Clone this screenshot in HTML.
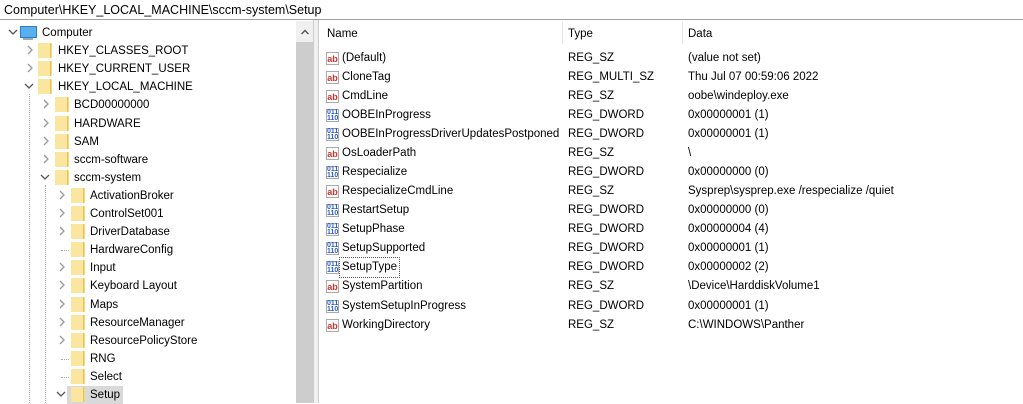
<!DOCTYPE html><html><head><style>
body{margin:0;width:1023px;height:403px;overflow:hidden;background:#fff;font-family:"Liberation Sans",sans-serif;font-size:11.5px;color:#000;position:relative}
.a{position:absolute}
.addr{left:0;top:0;width:1023px;height:20px;border-bottom:1px solid #a0a0a0;box-sizing:border-box;padding:3px 0 0 4px;font-size:12.5px}
.t{position:absolute;white-space:nowrap;line-height:18px;height:18px}
.fold{position:absolute;width:14px;height:15px;background:#f8d775;border-radius:1px}
.fold:after{content:"";position:absolute;left:0;top:0;width:12px;height:15px;background:#fbe6a0;border-right:1px solid #e8c15a}
.chev{position:absolute;width:10px;height:10px}
.dl{position:absolute;border-left:1px dotted #aaa;width:0}
.dh{position:absolute;border-top:1px dotted #aaa;height:0;width:8px}
.r{position:absolute;left:326px;white-space:nowrap;height:19px;line-height:19px}
.ic{position:absolute;left:0;top:3px;width:13px;height:13px;border:1px solid #aaa;background:#fff;font-size:9px;font-weight:bold;line-height:12px;text-align:center;box-sizing:border-box}
.ab{color:#d2322d}
.bn{color:#2b5bd0;font-size:7px;line-height:6px;letter-spacing:0}
</style></head><body>
<div class="a addr">Computer\HKEY_LOCAL_MACHINE\sccm-system\Setup</div>
<div class="a" style="left:296px;top:21px;width:17px;height:382px;background:#f0f0f0"></div>
<div class="a" style="left:296px;top:42px;width:17px;height:361px;background:#cdcdcd"></div>
<svg class="a" style="left:300px;top:28px" width="10" height="8"><path d="M1.5 6 L5 2.5 L8.5 6" fill="none" stroke="#555" stroke-width="1.4"/></svg>
<div class="a" style="left:313px;top:20px;width:4px;height:383px;background:#f0f0f0;border-left:1px solid #ccc;border-right:1px solid #ccc"></div>
<div class="a" style="left:327px;top:28px">Name</div>
<div class="a" style="left:568px;top:28px">Type</div>
<div class="a" style="left:688px;top:28px">Data</div>
<div class="a" style="left:562px;top:22px;width:1px;height:22px;background:#e5e5e5"></div>
<div class="a" style="left:682px;top:22px;width:1px;height:22px;background:#e5e5e5"></div>
<div id="tree"></div><div id="list"></div>
<script>
var T=[[0,'Computer','v'],[1,'HKEY_CLASSES_ROOT','>'],[1,'HKEY_CURRENT_USER','>'],[1,'HKEY_LOCAL_MACHINE','v'],[2,'BCD00000000','>'],[2,'HARDWARE','>'],[2,'SAM','>'],[2,'sccm-software','>'],[2,'sccm-system','v'],[3,'ActivationBroker','>'],[3,'ControlSet001','>'],[3,'DriverDatabase','>'],[3,'HardwareConfig',''],[3,'Input','>'],[3,'Keyboard Layout','>'],[3,'Maps','>'],[3,'ResourceManager','>'],[3,'ResourcePolicyStore','>'],[3,'RNG',''],[3,'Select',''],[3,'Setup','v']];
var h='';var X=[[8,20,42],[24,38,58],[40,55,74],[56,71,90]];
h+='<div class="dl" style="left:29px;top:94px;height:309px"></div><div class="dl" style="left:45px;top:185px;height:218px"></div>';
T.forEach(function(e,i){var y=23+i*18.1,x=X[e[0]];
if(e[1]=='Setup')h+='<div class="a" style="left:67px;top:'+(y+1)+'px;width:56px;height:18px;background:#d9d9d9"></div>';
if(e[2]=='>')h+='<svg class="chev" style="left:'+(x[0]+1)+'px;top:'+(y+4)+'px"><path d="M3 1 L7 5 L3 9" fill="none" stroke="#999" stroke-width="1.3"/></svg>';
else if(e[2]=='v')h+='<svg class="chev" style="left:'+x[0]+'px;top:'+(y+4)+'px"><path d="M1 3 L5 7 L9 3" fill="none" stroke="#555" stroke-width="1.3"/></svg>';
else h+='<div class="dh" style="left:'+(x[0]+5)+'px;top:'+(y+10)+'px"></div>';
if(i==0)h+='<div class="a" style="left:20px;top:'+(y+3)+'px;width:15px;height:10px;background:#5ab0ef;border:1px solid #2a7fc8"></div><div class="a" style="left:23px;top:'+(y+15)+'px;width:10px;height:2px;background:#9ab"></div>';
else h+='<div class="fold" style="left:'+x[1]+'px;top:'+(y+2)+'px"></div>';
h+='<div class="t" style="left:'+x[2]+'px;top:'+(y+1)+'px">'+e[1]+'</div>';});
document.getElementById('tree').innerHTML=h;
var L=[['a','(Default)','REG_SZ','(value not set)'],['a','CloneTag','REG_MULTI_SZ','Thu Jul 07 00:59:06 2022'],['a','CmdLine','REG_SZ','oobe\\windeploy.exe'],['b','OOBEInProgress','REG_DWORD','0x00000001 (1)'],['b','OOBEInProgressDriverUpdatesPostponed','REG_DWORD','0x00000001 (1)'],['a','OsLoaderPath','REG_SZ','\\'],['b','Respecialize','REG_DWORD','0x00000000 (0)'],['a','RespecializeCmdLine','REG_SZ','Sysprep\\sysprep.exe /respecialize /quiet'],['b','RestartSetup','REG_DWORD','0x00000000 (0)'],['b','SetupPhase','REG_DWORD','0x00000004 (4)'],['b','SetupSupported','REG_DWORD','0x00000001 (1)'],['b','SetupType','REG_DWORD','0x00000002 (2)'],['a','SystemPartition','REG_SZ','\\Device\\HarddiskVolume1'],['b','SystemSetupInProgress','REG_DWORD','0x00000001 (1)'],['a','WorkingDirectory','REG_SZ','C:\\WINDOWS\\Panther']];
h='';L.forEach(function(e,i){var y=48.5+i*19.08;
h+='<div class="r" style="top:'+y+'px;width:700px"><div class="ic '+(e[0]=='a'?'ab':'bn')+'">'+(e[0]=='a'?'ab':'011<br>110')+'</div><span style="position:absolute;left:16px'+(e[1]=='SetupType'?';outline:1px dotted #555;padding:0 2px;left:14px':'')+'">'+e[1]+'</span><span style="position:absolute;left:242px">'+e[2]+'</span><span style="position:absolute;left:362px">'+e[3]+'</span></div>';});
document.getElementById('list').innerHTML=h;
</script>
</body></html>
